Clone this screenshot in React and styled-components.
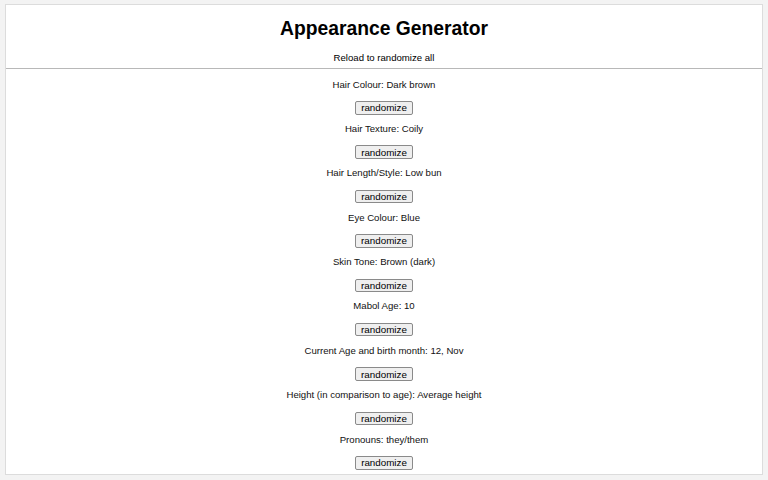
import React, { useState } from "react";
import styled, { createGlobalStyle } from "styled-components";

const GlobalStyle = createGlobalStyle`
  html, body {
    margin: 0;
    padding: 0;
    background: #f3f3f3;
    font-family: "Liberation Sans", Arial, sans-serif;
    color: #000;
  }
`;

const traits = [
  { label: "Hair Colour", value: "Dark brown" },
  { label: "Hair Texture", value: "Coily" },
  { label: "Hair Length/Style", value: "Low bun" },
  { label: "Eye Colour", value: "Blue" },
  { label: "Skin Tone", value: "Brown (dark)" },
  { label: "Mabol Age", value: "10" },
  { label: "Current Age and birth month", value: "12, Nov" },
  { label: "Height (in comparison to age)", value: "Average height" },
  { label: "Pronouns", value: "they/them" },
];

const App = () => {
  const [values] = useState(traits);

  return (
    <>
      <GlobalStyle />
      <Card>
        <Header>
          <Title>Appearance Generator</Title>
          <Hint>Reload to randomize all</Hint>
        </Header>
        <List>
          {values.map((t) => (
            <Item key={t.label}>
              <Label>
                {t.label}: {t.value}
              </Label>
              <Button type="button">randomize</Button>
            </Item>
          ))}
        </List>
      </Card>
    </>
  );
};

export default App;

const Card = styled.div`
  margin: 4px 5px 0;
  height: 471px;
  box-sizing: border-box;
  background: #fff;
  border: 1px solid #dcdcdc;
  text-align: center;
`;

const Header = styled.div`
  padding-top: 13px;
  padding-bottom: 5.5px;
  border-bottom: 1px solid #b8b8b8;
`;

const Title = styled.h1`
  margin: 0;
  font-size: 19.3px;
  line-height: 22px;
  font-weight: 700;
`;

const Hint = styled.p`
  margin: 11.5px 0 0;
  font-size: 9.6px;
  line-height: 11px;
`;

const List = styled.div`
  display: flex;
  flex-direction: column;
  align-items: center;
  padding-top: 9.5px;
`;

const Item = styled.div`
  display: flex;
  flex-direction: column;
  align-items: center;
  height: 44.4px;
`;

const Label = styled.p`
  margin: 0;
  font-size: 9.6px;
  line-height: 11px;
  color: #111;
`;

const Button = styled.button`
  margin-top: 11.5px;
  height: 13.5px;
  padding: 0 5px;
  box-sizing: border-box;
  font-family: "Liberation Sans", Arial, sans-serif;
  font-size: 9.8px;
  line-height: 11px;
  color: #000;
  background: #efefef;
  border: 1px solid #8a8a8a;
  border-radius: 2px;
`;
